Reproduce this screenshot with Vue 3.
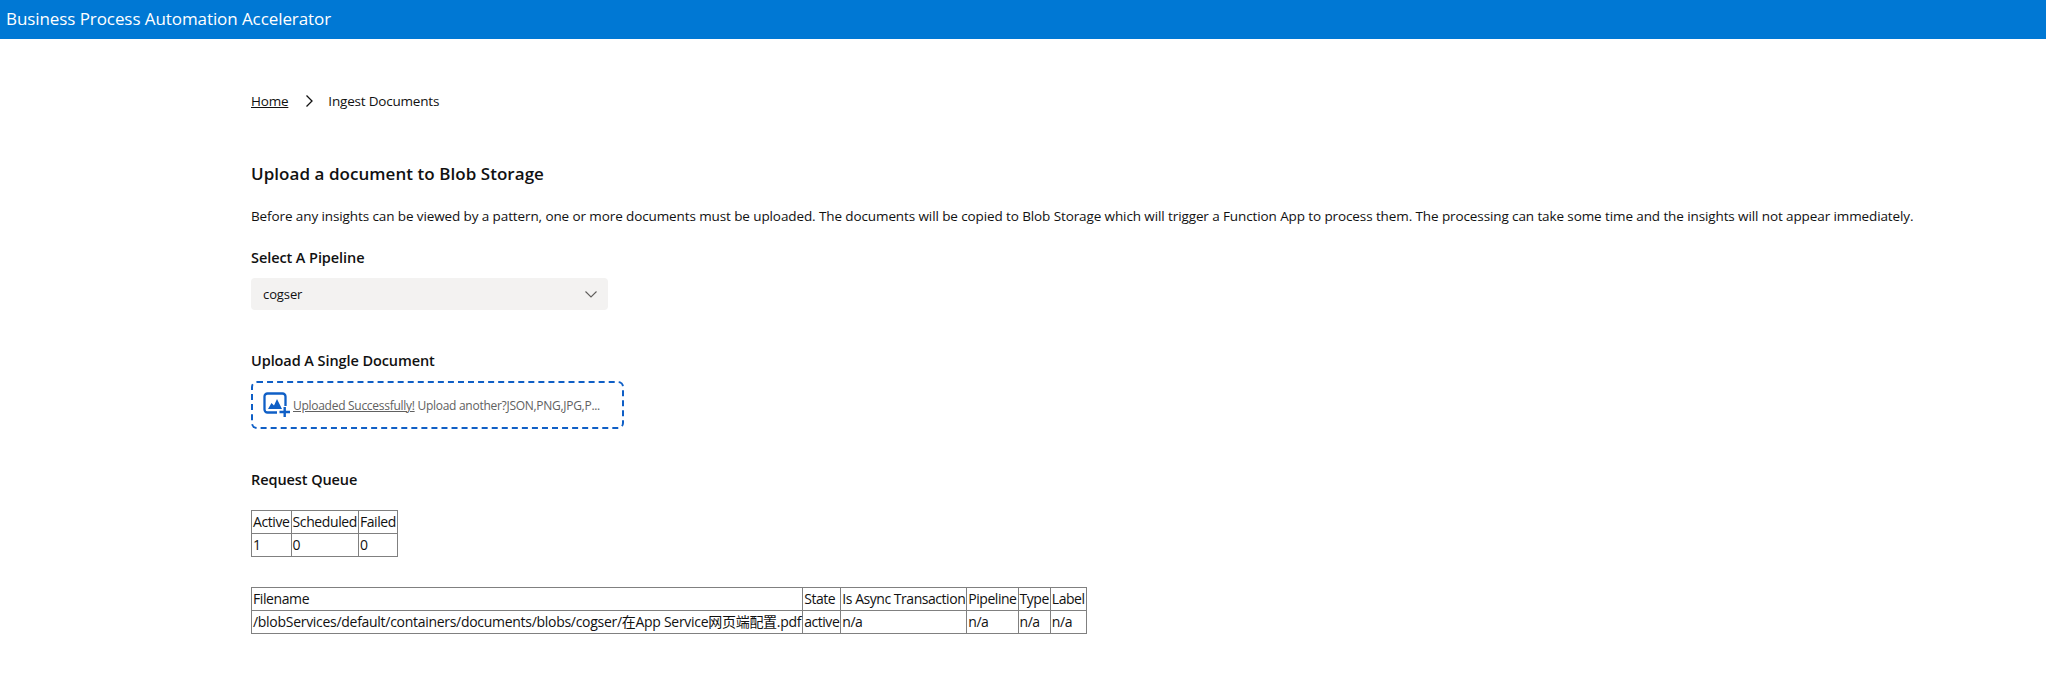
<template>
  <div class="page">
    <header class="bar">Business Process Automation Accelerator</header>
    <main class="content">
      <nav class="crumbs">
        <a class="home">Home</a>
        <svg class="sep" width="12" height="14" viewBox="0 0 12 14"><path d="M3.5 1.5 9 7l-5.5 5.5" fill="none" stroke="#111" stroke-width="1.3"/></svg>
        <span>Ingest Documents</span>
      </nav>
      <h2 class="title">Upload a document to Blob Storage</h2>
      <p class="intro">Before any insights can be viewed by a pattern, one or more documents must be uploaded. The documents will be copied to Blob Storage which will trigger a Function App to process them. The processing can take some time and the insights will not appear immediately.</p>
      <h3 class="label first">Select A Pipeline</h3>
      <div class="select">
        <span>cogser</span>
        <svg width="14" height="14" viewBox="0 0 14 14"><path d="M1.5 4.5 7 10l5.5-5.5" fill="none" stroke="#605e5c" stroke-width="1.1"/></svg>
      </div>
      <h3 class="label upload-label">Upload A Single Document</h3>
      <div class="drop">
        <svg class="drop-icon" width="28" height="28" viewBox="0 0 28 28">
          <path d="M14 21.500H4.500A3 3 0 0 1 1.500 18.500V5.500A3 3 0 0 1 4.500 2.500h15a3 3 0 0 1 3 3V15" fill="none" stroke="#0f5fc6" stroke-width="2.300"/>
          <path d="M5 18l3.500-6 2.500 2.500 3-6.500 5 10z" fill="#0f5fc6"/>
          <path d="M21.700 16v10M16.500 21h10.500" stroke="#0f5fc6" stroke-width="2.400" fill="none"/>
        </svg>
        <span class="drop-text"><u>Uploaded Successfully!</u> Upload another?JSON,PNG,JPG,P...</span>
      </div>
      <h3 class="label queue-label">Request Queue</h3>
      <table class="grid small">
        <tbody>
          <tr><th>Active</th><th>Scheduled</th><th>Failed</th></tr>
          <tr><td>1</td><td>0</td><td>0</td></tr>
        </tbody>
      </table>
      <table class="grid wide">
        <tbody>
          <tr><th>Filename</th><th>State</th><th>Is Async Transaction</th><th>Pipeline</th><th>Type</th><th>Label</th></tr>
          <tr><td class="path">/blobServices/default/containers/documents/blobs/cogser/在App Service网页端配置.pdf</td><td>active</td><td>n/a</td><td>n/a</td><td>n/a</td><td>n/a</td></tr>
        </tbody>
      </table>
    </main>
  </div>
</template>

<script setup>
</script>

<style>
html, body { margin: 0; background: #fff; }
</style>

<style scoped>
.page { font-family: "Open Sans", "Noto Sans CJK SC", sans-serif; color: #111; height: 687px; overflow: hidden; }
.bar { height: 39px; line-height: 37px; padding-left: 6px; background: #0078d4; color: #fff; font-size: 17px; letter-spacing: -0.08px; }
.content { padding: 0 0 0 251px; }
.crumbs { display: flex; align-items: center; height: 20px; margin-top: 52px; font-size: 13.500px; letter-spacing: -0.2px; }
.home { text-decoration: underline; }
.sep { margin: 0 13px 0 15px; }
.title { margin: 52px 0 0; font-size: 17px; line-height: 22px; font-weight: 600; letter-spacing: 0.05px; }
.intro { margin: 22px 0 0; font-size: 13.500px; line-height: 18px; white-space: nowrap; letter-spacing: -0.105px; }
.label { margin: 0; font-size: 14.500px; line-height: 20px; font-weight: 600; letter-spacing: -0.08px; }
.first { margin-top: 23px; }
.select { display: flex; align-items: center; justify-content: space-between; box-sizing: border-box; width: 357px; height: 32px; margin-top: 10px; padding: 0 10px 0 12px; background: #f3f2f1; border-radius: 4px; font-size: 13px; letter-spacing: -0.1px; }
.upload-label { margin-top: 41px; }
.drop { display: flex; align-items: center; box-sizing: border-box; width: 373px; height: 48px; margin-top: 10px; border: 2px dashed #0f5fc6; border-radius: 6px; padding-left: 10px; }
.drop-icon { flex: none; margin-right: 2px; }
.drop-text { font-size: 12px; color: #616161; white-space: nowrap; letter-spacing: -0.28px; }
.queue-label { margin-top: 41px; }
.grid { border-collapse: collapse; border: 1px solid #808080; font-size: 14px; letter-spacing: -0.4px; }
.grid th, .grid td { border: 1px solid #808080; padding: 1px; font-weight: 400; text-align: left; line-height: 20px; white-space: nowrap; }
.grid td.path { letter-spacing: -0.29px; }
.wide th:not(:first-child), .wide td:not(:first-child) { letter-spacing: -0.46px; }
.small { margin-top: 20px; }
.wide { margin-top: 30px; }
</style>
